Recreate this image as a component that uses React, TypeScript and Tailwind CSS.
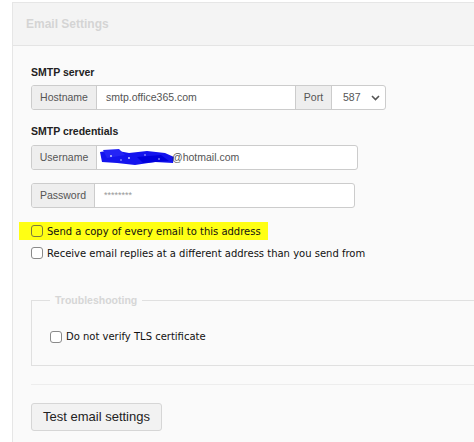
import React from 'react'

const arial = { fontFamily: '"Liberation Sans", Arial, sans-serif' }
const verdana = { fontFamily: '"DejaVu Sans", Verdana, sans-serif' }

function Box({ over }: { over?: boolean }) {
  return (
    <span
      className={`inline-block w-[12px] h-[12px] rounded-[3px] border shrink-0 ${
        over ? 'border-[#7c7c3c] bg-transparent' : 'border-[#8a8a8a] bg-white'
      }`}
    />
  )
}

function Addon({ label, w }: { label: string; w: string }) {
  return (
    <div className={`${w} h-full flex items-center justify-center bg-[#eeeeee] border-r border-[#cccccc] text-[10.5px] text-[#555]`}>
      {label}
    </div>
  )
}

// redacted bit of the address, a rough blue marker scrawl
function Scribble() {
  return (
    <svg width="76" height="17" viewBox="0 0 76 17" className="shrink-0">
      <path d="M1 3 L14 1 L30 4 L48 2 L66 4 L75 8 L74 14 L56 13 L36 16 L18 14 L3 13 Z" fill="#1414ee" />
      <path d="M4 1 L20 0 L26 6 L8 9 Z" fill="#2424f5" />
      <path d="M38 8 L62 6 L70 12 L44 14 Z" fill="#0000dc" />
      <circle cx="12" cy="7" r="1" fill="#c8c8ff" />
      <circle cx="22" cy="11" r="0.8" fill="#c8c8ff" />
      <circle cx="30" cy="9" r="1" fill="#c8c8ff" />
      <circle cx="46" cy="6" r="0.8" fill="#c8c8ff" />
      <circle cx="60" cy="10" r="0.8" fill="#c8c8ff" />
    </svg>
  )
}

export default function App() {
  return (
    <div className="w-[474px] h-[442px] bg-white overflow-hidden" style={arial}>
      <div className="ml-[12px] mt-[2px] h-[440px] border-l border-t border-[#e6e6e6] bg-[#fafafa]">
        <div className="h-[43px] bg-[#f4f4f4] border-b border-[#e4e4e4] flex items-center pl-[13px]">
          <span className="text-[12px] font-bold text-[#d4d4d4]">Email Settings</span>
        </div>

        <div className="pl-[18px] pt-[19px]">
          <div className="text-[10.5px] font-bold text-[#222] h-[16px] flex items-center">SMTP server</div>
          <div className="mt-[4px] w-[355px] h-[25px] flex border border-[#cccccc] rounded-[3px] overflow-hidden bg-white">
            <Addon label="Hostname" w="w-[65px]" />
            <div className="w-[198px] flex items-center pl-[9px] text-[10.5px] text-[#555]">smtp.office365.com</div>
            <div className="w-[37px] h-full flex items-center justify-center bg-[#eeeeee] border-l border-r border-[#cccccc] text-[10.5px] text-[#555]">
              Port
            </div>
            <div className="flex-1 flex items-center justify-between pl-[11px] pr-[5px] text-[10.5px] text-[#555]">
              <span>587</span>
              <svg width="9" height="6" viewBox="0 0 9 6">
                <path d="M1 1 L4.5 4.5 L8 1" fill="none" stroke="#555" strokeWidth="1.6" />
              </svg>
            </div>
          </div>

          <div className="mt-[14px] text-[10.5px] font-bold text-[#222] h-[16px] flex items-center">SMTP credentials</div>
          <div className="mt-[5px] w-[327px] h-[25px] flex border border-[#cccccc] rounded-[3px] overflow-hidden bg-white">
            <Addon label="Username" w="w-[65px]" />
            <div className="flex-1 flex items-center pl-[2px] text-[10.5px] text-[#555]">
              <Scribble />
              <span className="-ml-[3px]">@hotmail.com</span>
            </div>
          </div>
          <div className="mt-[13px] w-[324px] h-[25px] flex border border-[#cccccc] rounded-[3px] overflow-hidden bg-white">
            <Addon label="Password" w="w-[63px]" />
            <div className="flex-1 flex items-center pl-[9px] text-[9px] text-[#999]">********</div>
          </div>
        </div>

        <div className="mt-[14px] flex flex-col" style={verdana}>
          <div className="w-[249px] h-[18px] ml-[6px] bg-[#ffff14] flex items-center gap-[4px] pl-[12px] text-[10px] text-[#111]">
            <Box over />
            <span>Send a copy of every email to this address</span>
          </div>
          <div className="mt-[4px] h-[18px] flex items-center gap-[4px] pl-[18px] text-[10px] text-[#111]">
            <Box />
            <span>Receive email replies at a different address than you send from</span>
          </div>
        </div>

        <div className="ml-[18px] mt-[38px] relative border border-[#e0e0e0] border-r-0 h-[66px]">
          <span className="absolute -top-[8px] left-[18px] px-[5px] bg-[#fafafa] text-[10.5px] font-bold text-[#d6d6d6]" style={arial}>
            Troubleshooting
          </span>
          <div className="pl-[18px] pt-[28px] flex items-center gap-[4px] text-[10px] text-[#111]" style={verdana}>
            <Box />
            <span>Do not verify TLS certificate</span>
          </div>
        </div>

        <div className="ml-[18px] mt-[18px] border-t border-[#ededed]" />

        <div className="ml-[18px] mt-[18px]">
          <button className="w-[131px] h-[28px] rounded-[3px] border border-[#d6d6d6] bg-[#f2f2f2] text-[13px] text-[#222]" style={arial}>
            Test email settings
          </button>
        </div>
      </div>
    </div>
  )
}
